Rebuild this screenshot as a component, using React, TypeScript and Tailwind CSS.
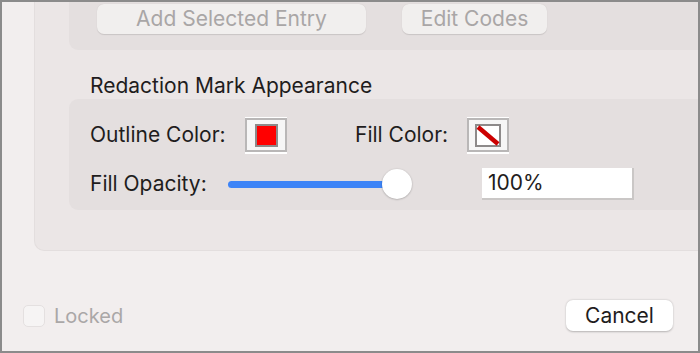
import React from "react";

function Well({ children }: { children: React.ReactNode }) {
  return (
    <div className="flex h-[34px] w-[42px] items-center justify-center border-2 border-[#b9b7b7] bg-[#f6f6f6] shadow-[0_-1px_0_#ffffff,0_2px_0_#ffffff]">
      {children}
    </div>
  );
}

export default function App() {
  return (
    <div
      className="flex h-[353px] w-[700px] flex-col overflow-hidden border-2 border-[#8b8b8b] bg-[#f2eeee] text-[21px] text-[#1f1d1d]"
      style={{ fontFamily: "Inter, 'Liberation Sans', sans-serif" }}
    >
      <div className="ml-[32px] flex h-[249px] flex-col rounded-bl-[10px] border-b border-l border-[#e3dede] bg-[#ebe6e6]">
        <div className="ml-[34px] flex h-[48px] items-start gap-[36px] rounded-bl-[9px] bg-[#e4dfdf] pl-[28px] pt-[2px]">
          <div className="flex h-[30px] w-[269px] items-center justify-center rounded-[7px] bg-[#f1efee] text-[#a9a6a6] shadow-[0_0.5px_1px_rgba(0,0,0,0.12)]">
            Add Selected Entry
          </div>
          <div className="flex h-[30px] w-[145px] items-center justify-center rounded-[7px] bg-[#f1efee] text-[#a9a6a6] shadow-[0_0.5px_1px_rgba(0,0,0,0.12)]">
            Edit Codes
          </div>
        </div>
        <div className="ml-[55px] mt-[23px] h-[26px] leading-[26px]">Redaction Mark Appearance</div>
        <div className="ml-[34px] flex h-[111px] flex-col rounded-l-[9px] bg-[#e4dfdf] pl-[21px]">
          <div className="mt-[19px] flex items-center">
            <div className="w-[155px]">Outline Color:</div>
            <Well>
              <div className="h-[23px] w-[23px] border-2 border-[#8d8a8a] bg-[#ff0000]" />
            </Well>
            <div className="ml-[68px] w-[112px]">Fill Color:</div>
            <Well>
              <svg width="26" height="23" viewBox="0 0 26 23" className="block">
                <rect x="1" y="1" width="24" height="21" fill="#ffffff" stroke="#8d8a8a" strokeWidth="2" />
                <line x1="3" y1="3" x2="23" y2="20" stroke="#cc0000" strokeWidth="4.5" />
              </svg>
            </Well>
          </div>
          <div className="mt-[16px] flex items-center">
            <div className="w-[138px]">Fill Opacity:</div>
            <div className="relative flex h-[30px] w-[184px] items-center">
              <div className="h-[7px] w-[170px] rounded-full bg-[#3d84f7]" />
              <div className="absolute right-0 top-0 h-[30px] w-[30px] rounded-full bg-white shadow-[0_0.5px_2px_rgba(0,0,0,0.3)]" />
            </div>
            <div className="ml-[70px] flex h-[32px] w-[152px] items-center border-b-2 border-r-2 border-[#cac7c6] bg-white pl-[6px]">
              100%
            </div>
          </div>
        </div>
      </div>
      <div className="mt-[49px] flex items-center justify-between pl-[21px] pr-[25px]">
        <div className="flex items-center gap-[9px]">
          <div className="h-[22px] w-[22px] rounded-[5px] border border-[#e4e0e0] bg-[#f6f4f4]" />
          <div className="text-[20px] text-[#aaa7a7]">Locked</div>
        </div>
        <div className="flex h-[31px] w-[107px] items-center justify-center rounded-[7px] bg-white shadow-[0_0.5px_2px_rgba(0,0,0,0.25)]">
          Cancel
        </div>
      </div>
    </div>
  );
}
